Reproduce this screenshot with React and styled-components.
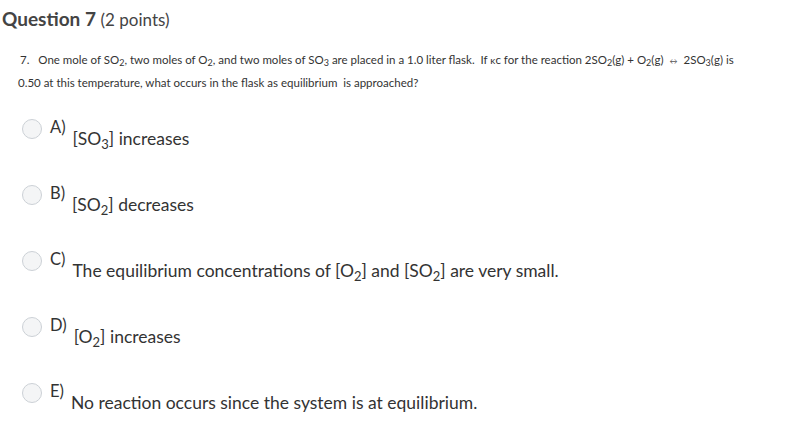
import React from "react";
import styled, { createGlobalStyle } from "styled-components";

const GlobalStyle = createGlobalStyle`
  body {
    margin: 0;
    background: #fff;
    font-family: Lato, "Open Sans", sans-serif;
    color: #2d3b45;
  }
`;

const Page = styled.div`
  padding: 6px 0 0 2px;
`;

const Title = styled.h2`
  margin: 0;
  font-size: 19px;
  font-weight: 700;
  color: #444;
  line-height: 26px;
  span {
    font-weight: 400;
    font-size: 17px;
  }
`;

const Prompt = styled.div`
  margin: 16px 0 0 16px;
  font-size: 11.5px;
  line-height: 21px;
  color: #333;
  p {
    margin: 0;
  }
  sub {
    font-size: 9px;
    vertical-align: -2px;
    line-height: 0;
  }
`;

const Lead = styled.span`
  margin-left: 2px;
  margin-right: 6px;
`;

const Kappa = styled.span`
  font-size: 10px;
`;

const Arrow = styled.span`
  font-size: 8px;
  color: #555;
  margin: 0 6px;
`;

const Options = styled.div`
  margin-top: 24px;
  padding-left: 20px;
  display: flex;
  flex-direction: column;
  gap: 30px;
`;

const Option = styled.label`
  display: flex;
  align-items: flex-start;
  height: 36px;
`;

const Radio = styled.span`
  width: 20px;
  height: 20px;
  border-radius: 50%;
  border: 1px solid #ccd1d6;
  background: #f4f5f6;
  box-sizing: border-box;
  margin-top: 2px;
  flex-shrink: 0;
`;

const Letter = styled.span`
  margin-left: 8px;
  font-size: 16.5px;
  line-height: 20px;
  color: #333;
`;

const Answer = styled.span`
  margin-left: 7px;
  margin-top: 12px;
  font-size: 17.5px;
  line-height: 20px;
  color: #333;
  sub {
    font-size: 13px;
    vertical-align: -4px;
    line-height: 0;
  }
`;

const options = [
  { letter: "A)", text: <>[SO<sub>3</sub>] increases</> },
  { letter: "B)", text: <>[SO<sub>2</sub>] decreases</> },
  {
    letter: "C)",
    text: (
      <>
        The equilibrium concentrations of [O<sub>2</sub>] and [SO<sub>2</sub>] are very small.
      </>
    ),
  },
  { letter: "D)", text: <>[O<sub>2</sub>] increases</> },
  { letter: "E)", text: <>No reaction occurs since the system is at equilibrium.</> },
];

export default function App() {
  return (
    <Page>
      <GlobalStyle />
      <Title>
        Question 7 <span>(2 points)</span>
      </Title>
      <Prompt>
        <p>
          <Lead>7.</Lead> One mole of SO<sub>2</sub>, two moles of O<sub>2</sub>, and two moles of SO
          <sub>3</sub> are placed in a 1.0 liter flask.&nbsp; If <Kappa>κ</Kappa>c for the reaction 2SO
          <sub>2</sub>(g) + O<sub>2</sub>(g)<Arrow>↔</Arrow>2SO<sub>3</sub>(g) is
        </p>
        <p>0.50 at this temperature, what occurs in the flask as equilibrium&nbsp; is approached?</p>
      </Prompt>
      <Options>
        {options.map((o) => (
          <Option key={o.letter}>
            <Radio />
            <Letter>{o.letter}</Letter>
            <Answer>{o.text}</Answer>
          </Option>
        ))}
      </Options>
    </Page>
  );
}
